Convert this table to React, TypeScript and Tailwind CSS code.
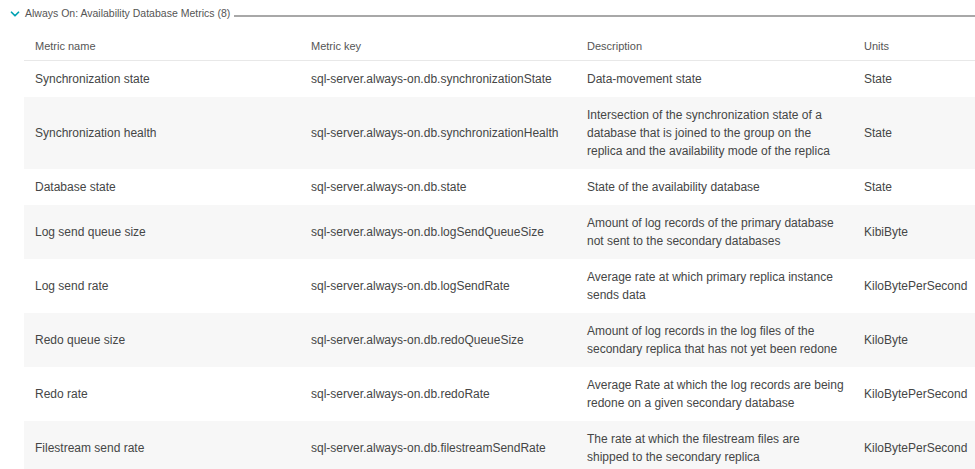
import { ChevronDown } from "lucide-react";

const rows = [
  ["Synchronization state", "sql-server.always-on.db.synchronizationState", "Data-movement state", "State"],
  [
    "Synchronization health",
    "sql-server.always-on.db.synchronizationHealth",
    "Intersection of the synchronization state of a database that is joined to the group on the replica and the availability mode of the replica",
    "State",
  ],
  ["Database state", "sql-server.always-on.db.state", "State of the availability database", "State"],
  [
    "Log send queue size",
    "sql-server.always-on.db.logSendQueueSize",
    "Amount of log records of the primary database not sent to the secondary databases",
    "KibiByte",
  ],
  [
    "Log send rate",
    "sql-server.always-on.db.logSendRate",
    "Average rate at which primary replica instance sends data",
    "KiloBytePerSecond",
  ],
  [
    "Redo queue size",
    "sql-server.always-on.db.redoQueueSize",
    "Amount of log records in the log files of the secondary replica that has not yet been redone",
    "KiloByte",
  ],
  [
    "Redo rate",
    "sql-server.always-on.db.redoRate",
    "Average Rate at which the log records are being redone on a given secondary database",
    "KiloBytePerSecond",
  ],
  [
    "Filestream send rate",
    "sql-server.always-on.db.filestreamSendRate",
    "The rate at which the filestream files are shipped to the secondary replica",
    "KiloBytePerSecond",
  ],
];

export default function App() {
  return (
    <div className="w-[975px] h-[469px] overflow-hidden bg-white font-['Liberation_Sans',sans-serif] text-[#454646]">
      <div className="flex items-center h-[28px] pl-[8px]">
        <ChevronDown className="w-[14px] h-[14px] text-[#00a1b2]" strokeWidth={3} />
        <span className="ml-[3px] text-[10.5px] text-[#555]">Always On: Availability Database Metrics (8)</span>
        <div className="flex-1 ml-[4px] mt-[3px] border-t-2 border-[#a8a8a8]" />
      </div>
      <div className="ml-[24px]">
        <div className="grid grid-cols-[276px_276px_276px_1fr] h-[33px] pt-[4px] items-center border-b border-[#e8e8e8] text-[11px] text-[#555]">
          <div className="pl-[11px]">Metric name</div>
          <div className="pl-[11px]">Metric key</div>
          <div className="pl-[11px]">Description</div>
          <div className="pl-[12px]">Units</div>
        </div>
        {rows.map((r, i) => (
          <div
            key={r[0]}
            className={`grid grid-cols-[276px_276px_276px_1fr] items-center py-[9px] text-[12px] leading-[18px] ${
              i % 2 === 1 ? "bg-[#f7f7f7]" : "bg-white"
            }`}
          >
            <div className="pl-[11px]">{r[0]}</div>
            <div className="pl-[11px]">{r[1]}</div>
            <div className="pl-[11px] pr-[8px]">{r[2]}</div>
            <div className="pl-[12px]">{r[3]}</div>
          </div>
        ))}
      </div>
    </div>
  );
}
